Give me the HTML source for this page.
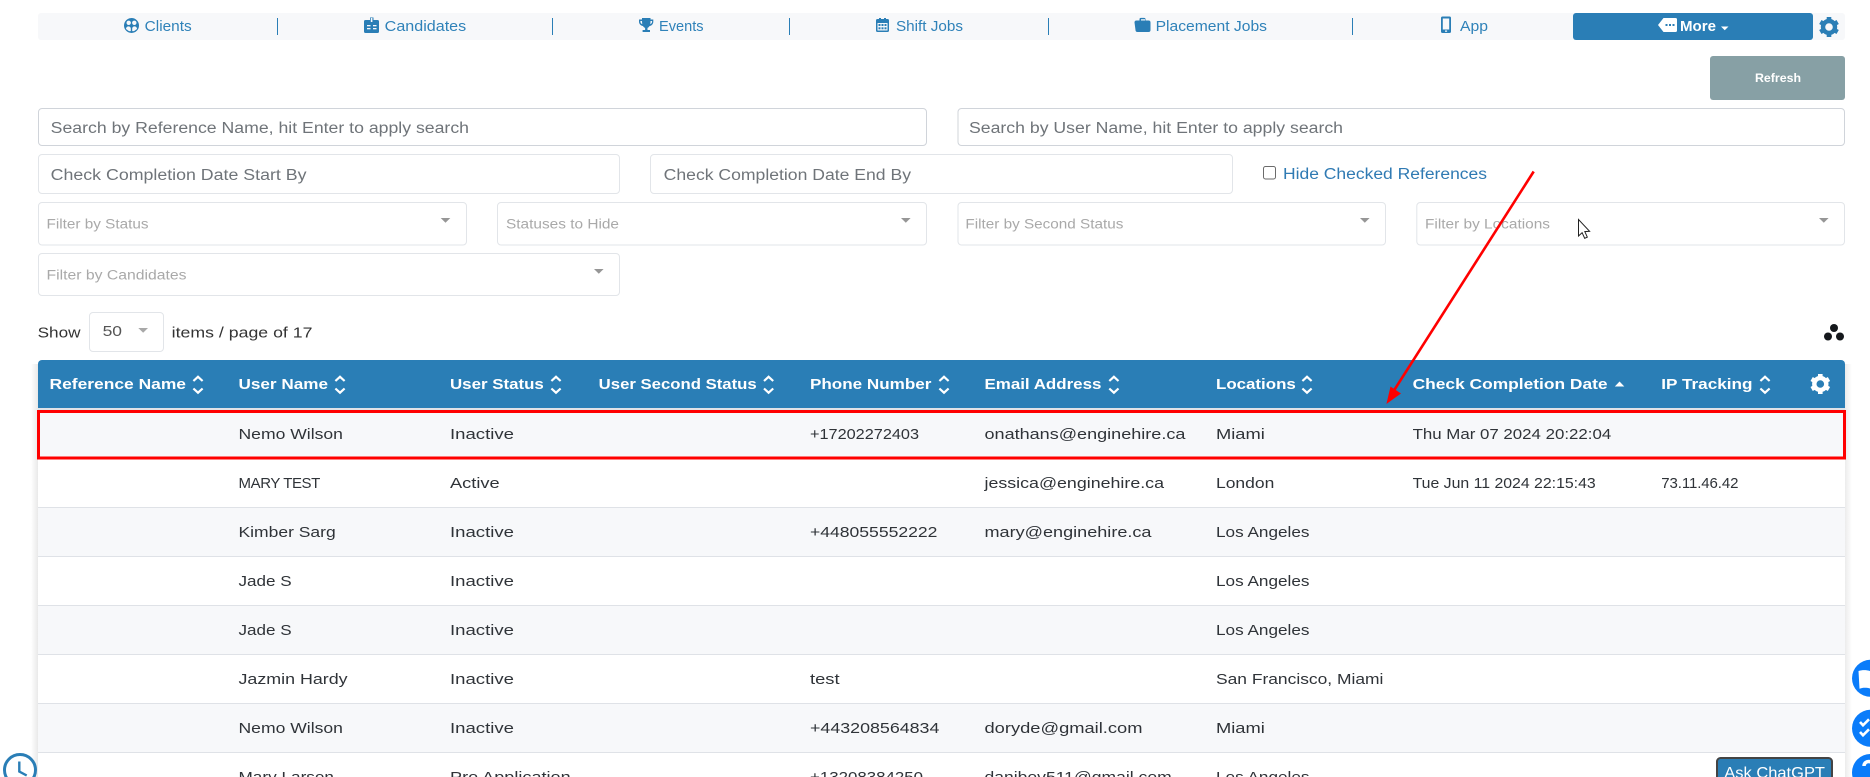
<!DOCTYPE html>
<html lang="en"><head><meta charset="utf-8"><title>References</title>
<style>
html,body{margin:0;padding:0;background:#fff;width:1870px;height:777px;overflow:hidden}
svg{display:block}
text{font-family:"Liberation Sans",sans-serif}
.n{font-size:14.5px;fill:#2f82b9}
.p{font-size:15.5px;fill:#6f7479}
.f{font-size:13.5px;fill:#a9a9a9}
.h{font-size:15px;font-weight:700;fill:#fff}
.c{font-size:15px;fill:#2f3338}
.b{fill:#fff;stroke:#e2e5e9;stroke-width:1}
.b2{fill:#fff;stroke:#d0d4da;stroke-width:1}
</style></head><body>
<svg width="1870" height="777" viewBox="0 0 1870 777" xmlns="http://www.w3.org/2000/svg">
<defs>
<linearGradient id="gl" x1="0" x2="1" y1="0" y2="0"><stop offset="0" stop-color="#fff"/><stop offset="1" stop-color="#e9e9e9"/></linearGradient>
<linearGradient id="gr" x1="0" x2="1" y1="0" y2="0"><stop offset="0" stop-color="#ececec"/><stop offset="1" stop-color="#fff"/></linearGradient>
<g id="s"><path d="M-4.600 6 0 1.800 4.600 6M-4.600 13.500 0 17.700 4.600 13.500" fill="none" stroke="#fff" stroke-width="2.200"/></g>
<g id="gear"><circle cx="0" cy="0" r="6" fill="none" stroke="currentColor" stroke-width="4.4"/><g fill="currentColor"><rect x="-2.3" y="-10" width="4.6" height="4"/><rect x="-2.3" y="6" width="4.6" height="4"/><rect x="-2.3" y="-10" width="4.6" height="4" transform="rotate(60)"/><rect x="-2.3" y="6" width="4.6" height="4" transform="rotate(60)"/><rect x="-2.3" y="-10" width="4.6" height="4" transform="rotate(120)"/><rect x="-2.3" y="6" width="4.6" height="4" transform="rotate(120)"/></g></g>
<path id="arr" d="M0 0H9.6L4.8 4.7Z" fill="#969696"/>
</defs>

<!-- nav -->
<rect x="38" y="13" width="1807" height="27" rx="3" fill="#f7f8fa"/>
<g fill="#2a7eb6">
<rect x="277" y="18" width="1" height="17"/><rect x="552" y="18" width="1" height="17"/><rect x="789" y="18" width="1" height="17"/><rect x="1048" y="18" width="1" height="17"/><rect x="1352" y="18" width="1" height="17"/>
<!-- clients -->
<circle cx="131.500" cy="25.500" r="7.500"/>
<circle cx="128.700" cy="22.800" r="2.200" fill="#f7f8fa"/><circle cx="134.300" cy="22.800" r="2.200" fill="#f7f8fa"/>
<path d="M126 29c0-3.300 4.500-3.600 4.800-.6v2.700h-1.800zM132.200 28.400c.3-3 4.800-2.700 4.800.6l-3 2.100h-1.800z" fill="#f7f8fa"/>
<!-- candidates -->
<path d="M364 21.500a1.500 1.500 0 0 1 1.500-1.500H370v-2.500h3.500V20h4a1.500 1.500 0 0 1 1.500 1.500v10a1.500 1.500 0 0 1-1.500 1.500h-12a1.500 1.500 0 0 1-1.500-1.500z"/>
<g fill="#f7f8fa"><rect x="370.800" y="18" width="1.600" height="4"/><rect x="367" y="25" width="3.500" height="1.300"/><rect x="373" y="25" width="3.500" height="1.300"/><rect x="367" y="28" width="3.500" height="1.300"/><rect x="373" y="28" width="3.500" height="1.300"/></g>
<!-- trophy -->
<path d="M642 18h8.500v1.500h2.800v2.200c0 2.500-2 4-3.700 4.300-.6 1-1.400 1.600-2.100 1.900v2.100h2.500V32h-7.400v-2h2.500v-2.100c-.8-.3-1.600-.9-2.200-1.900-1.700-.3-3.900-1.800-3.900-4.300v-2.200H642zM640.400 21v.7c0 1.100.8 2 1.900 2.500-.2-1-.3-2-.3-3.200zM650.500 21c0 1.200-.1 2.200-.3 3.200 1.100-.5 1.900-1.400 1.900-2.500V21z" fill-rule="evenodd"/>
<!-- calendar -->
<path d="M876 20.500a1.500 1.500 0 0 1 1.500-1.500H879V18h2v1h3V18h2v1h1.500a1.500 1.500 0 0 1 1.500 1.500v10a1.500 1.500 0 0 1-1.500 1.500h-10a1.500 1.500 0 0 1-1.500-1.500z"/>
<rect x="877.500" y="23" width="10" height="7.500" fill="#f7f8fa"/>
<g><rect x="878.500" y="24" width="2" height="2"/><rect x="881.500" y="24" width="2" height="2"/><rect x="884.500" y="24" width="2" height="2"/><rect x="878.500" y="27.300" width="2" height="2"/><rect x="881.500" y="27.300" width="2" height="2"/><rect x="884.500" y="27.300" width="2" height="2"/></g>
<!-- briefcase -->
<path d="M1134.500 22.500a2 2 0 0 1 2-2h3v-1.300a1.300 1.300 0 0 1 1.300-1.300h3.400a1.300 1.300 0 0 1 1.300 1.300v1.300h3a2 2 0 0 1 2 2V30a2 2 0 0 1-2 2h-11a2 2 0 0 1-2-2zM1141 20.500h4v-1.200h-4z" fill-rule="evenodd"/>
<!-- mobile -->
<path d="M1441 18a1.500 1.500 0 0 1 1.500-1.500h7a1.500 1.500 0 0 1 1.500 1.500v13.500a1.500 1.500 0 0 1-1.500 1.500h-7a1.500 1.500 0 0 1-1.500-1.500zM1442.800 18.500V29.500h6.400V18.500zM1445 30.500h2.100v1.200h-2.100z" fill-rule="evenodd"/>
</g>
<text class="n" x="144.700" y="31" textLength="47" lengthAdjust="spacingAndGlyphs">Clients</text>
<text class="n" x="384.700" y="31" textLength="81.500" lengthAdjust="spacingAndGlyphs">Candidates</text>
<text class="n" x="659" y="31" textLength="44.600" lengthAdjust="spacingAndGlyphs">Events</text>
<text class="n" x="896" y="31" textLength="67" lengthAdjust="spacingAndGlyphs">Shift Jobs</text>
<text class="n" x="1155.600" y="31" textLength="111.400" lengthAdjust="spacingAndGlyphs">Placement Jobs</text>
<text class="n" x="1460" y="31" textLength="28" lengthAdjust="spacingAndGlyphs">App</text>
<rect x="1573" y="13" width="240" height="27" rx="3" fill="#2a7eb6"/>
<path d="M1663.500 18H1675.500a1.500 1.500 0 0 1 1.500 1.500v11a1.500 1.500 0 0 1-1.500 1.500H1663.500L1658 25Z" fill="#fff"/>
<g fill="#2a7eb6"><rect x="1665.500" y="24" width="2" height="2"/><rect x="1669" y="24" width="2" height="2"/><rect x="1672.500" y="24" width="2" height="2"/></g>
<text x="1680" y="31" font-size="14.500" font-weight="700" fill="#fff" textLength="36" lengthAdjust="spacingAndGlyphs">More</text>
<path d="M1721 26.500h7.500l-3.750 3.800z" fill="#fff"/>
<use href="#gear" transform="translate(1829 27)" style="color:#2a7eb6"/>

<!-- refresh -->
<rect x="1710" y="56" width="135" height="44" rx="3" fill="#87a0a5"/>
<text x="1755" y="82" font-size="12" font-weight="700" fill="#fff" textLength="46" lengthAdjust="spacingAndGlyphs">Refresh</text>

<!-- inputs -->
<rect class="b2" x="38.500" y="108.500" width="888" height="37" rx="3.500"/>
<text class="p" x="50.700" y="133" textLength="418.300" lengthAdjust="spacingAndGlyphs">Search by Reference Name, hit Enter to apply search</text>
<rect class="b2" x="958" y="108.500" width="886.500" height="37" rx="3.500"/>
<text class="p" x="969" y="133" textLength="374" lengthAdjust="spacingAndGlyphs">Search by User Name, hit Enter to apply search</text>
<rect class="b" x="38.500" y="154.500" width="581" height="39" rx="3.500"/>
<text class="p" x="50.700" y="180" textLength="255.800" lengthAdjust="spacingAndGlyphs">Check Completion Date Start By</text>
<rect class="b" x="650.500" y="154.500" width="582" height="39" rx="3.500"/>
<text class="p" x="663.700" y="180" textLength="247.300" lengthAdjust="spacingAndGlyphs">Check Completion Date End By</text>
<rect x="1263.500" y="166.500" width="12" height="12.500" rx="2" fill="#fff" stroke="#6b6b6b"/>
<text x="1283" y="179" font-size="15.500" fill="#2f7ab3" textLength="204" lengthAdjust="spacingAndGlyphs">Hide Checked References</text>

<!-- selects -->
<rect class="b" x="38.500" y="202.500" width="428" height="42.500" rx="3.500"/>
<rect class="b" x="497.500" y="202.500" width="429" height="42.500" rx="3.500"/>
<rect class="b" x="958" y="202.500" width="427.500" height="42.500" rx="3.500"/>
<rect class="b" x="1416.800" y="202.500" width="427.700" height="42.500" rx="3.500"/>
<rect class="b" x="38.500" y="253.500" width="581" height="42" rx="3.500"/>
<text class="f" x="46.500" y="228.500" textLength="102" lengthAdjust="spacingAndGlyphs">Filter by Status</text>
<text class="f" x="506" y="228.500" textLength="113" lengthAdjust="spacingAndGlyphs">Statuses to Hide</text>
<text class="f" x="965.400" y="228.500" textLength="158" lengthAdjust="spacingAndGlyphs">Filter by Second Status</text>
<text class="f" x="1425" y="228.500" textLength="125" lengthAdjust="spacingAndGlyphs">Filter by Locations</text>
<text class="f" x="46.500" y="279.500" textLength="140" lengthAdjust="spacingAndGlyphs">Filter by Candidates</text>
<use href="#arr" x="440.700" y="218"/><use href="#arr" x="901" y="218"/><use href="#arr" x="1360" y="218"/><use href="#arr" x="1819" y="218"/><use href="#arr" x="594" y="269"/>

<!-- show -->
<text x="37.600" y="337.300" font-size="15" fill="#333" textLength="42.900" lengthAdjust="spacingAndGlyphs">Show</text>
<rect class="b" x="89.500" y="312.500" width="74" height="39" rx="3.500"/>
<text x="102.600" y="336" font-size="15" fill="#555" textLength="19.400" lengthAdjust="spacingAndGlyphs">50</text>
<path d="M138.300 328H148L143.150 332.700Z" fill="#a8a8a8"/>
<text x="171.700" y="337.300" font-size="15" fill="#333" textLength="140.800" lengthAdjust="spacingAndGlyphs">items / page of 17</text>
<g fill="#15181c"><circle cx="1834" cy="328" r="4"/><circle cx="1828" cy="336.500" r="4"/><circle cx="1840" cy="336.500" r="4"/></g>

<!-- table shadow -->
<rect x="31" y="364" width="7" height="413" fill="url(#gl)"/>
<rect x="1845" y="364" width="7" height="413" fill="url(#gr)"/>

<!-- table rows -->
<rect x="38" y="408" width="1807" height="2" fill="#dfe2e7"/>
<rect x="38" y="410" width="1807" height="48" fill="#f7f8fa"/>
<rect x="38" y="458" width="1807" height="49" fill="#fff"/>
<rect x="38" y="507" width="1807" height="49" fill="#f7f8fa"/>
<rect x="38" y="556" width="1807" height="49" fill="#fff"/>
<rect x="38" y="605" width="1807" height="49" fill="#f7f8fa"/>
<rect x="38" y="654" width="1807" height="49" fill="#fff"/>
<rect x="38" y="703" width="1807" height="49" fill="#f7f8fa"/>
<rect x="38" y="752" width="1807" height="25" fill="#fff"/>
<g fill="#dfe2e7"><rect x="38" y="507" width="1807" height="1"/><rect x="38" y="556" width="1807" height="1"/><rect x="38" y="605" width="1807" height="1"/><rect x="38" y="654" width="1807" height="1"/><rect x="38" y="703" width="1807" height="1"/><rect x="38" y="752" width="1807" height="1"/></g>

<!-- header -->
<path d="M38 364a4 4 0 0 1 4-4H1841a4 4 0 0 1 4 4V408H38Z" fill="#2a7eb6"/>
<text class="h" x="49.500" y="389" textLength="136.500" lengthAdjust="spacingAndGlyphs">Reference Name</text><use href="#s" x="198" y="375"/>
<text class="h" x="238.500" y="389" textLength="89.500" lengthAdjust="spacingAndGlyphs">User Name</text><use href="#s" x="340" y="375"/>
<text class="h" x="450" y="389" textLength="93.800" lengthAdjust="spacingAndGlyphs">User Status</text><use href="#s" x="556" y="375"/>
<text class="h" x="598.700" y="389" textLength="158" lengthAdjust="spacingAndGlyphs">User Second Status</text><use href="#s" x="768.600" y="375"/>
<text class="h" x="810" y="389" textLength="121.400" lengthAdjust="spacingAndGlyphs">Phone Number</text><use href="#s" x="944" y="375"/>
<text class="h" x="984.500" y="389" textLength="116.900" lengthAdjust="spacingAndGlyphs">Email Address</text><use href="#s" x="1113.900" y="375"/>
<text class="h" x="1216" y="389" textLength="79.800" lengthAdjust="spacingAndGlyphs">Locations</text><use href="#s" x="1307" y="375"/>
<text class="h" x="1412.600" y="389" textLength="195" lengthAdjust="spacingAndGlyphs">Check Completion Date</text><path d="M1614.800 386.500h9.500l-4.750-5z" fill="#fff"/>
<text class="h" x="1661.300" y="389" textLength="91.200" lengthAdjust="spacingAndGlyphs">IP Tracking</text><use href="#s" x="1765" y="375"/>
<use href="#gear" transform="translate(1820.300 384)" style="color:#fff"/>

<!-- cells -->
<text class="c" x="238.500" y="439" textLength="104.400" lengthAdjust="spacingAndGlyphs">Nemo Wilson</text>
<text class="c" x="450" y="439" textLength="64" lengthAdjust="spacingAndGlyphs">Inactive</text>
<text class="c" x="810" y="439" textLength="109" lengthAdjust="spacingAndGlyphs">+17202272403</text>
<text class="c" x="984.500" y="439" textLength="200.900" lengthAdjust="spacingAndGlyphs">onathans@enginehire.ca</text>
<text class="c" x="1216" y="439" textLength="48.800" lengthAdjust="spacingAndGlyphs">Miami</text>
<text class="c" x="1412.600" y="439" textLength="198.600" lengthAdjust="spacingAndGlyphs">Thu Mar 07 2024 20:22:04</text>

<text class="c" x="238.500" y="488" letter-spacing="-0.4">MARY TEST</text>
<text class="c" x="450" y="488" textLength="49.700" lengthAdjust="spacingAndGlyphs">Active</text>
<text class="c" x="984.500" y="488" textLength="179.500" lengthAdjust="spacingAndGlyphs">jessica@enginehire.ca</text>
<text class="c" x="1216" y="488" textLength="58.300" lengthAdjust="spacingAndGlyphs">London</text>
<text class="c" x="1412.600" y="488" textLength="183.100" lengthAdjust="spacingAndGlyphs">Tue Jun 11 2024 22:15:43</text>
<text class="c" x="1661.300" y="488" letter-spacing="-0.1">73.11.46.42</text>

<text class="c" x="238.500" y="537" textLength="97.200" lengthAdjust="spacingAndGlyphs">Kimber Sarg</text>
<text class="c" x="450" y="537" textLength="64" lengthAdjust="spacingAndGlyphs">Inactive</text>
<text class="c" x="810" y="537" textLength="127.400" lengthAdjust="spacingAndGlyphs">+448055552222</text>
<text class="c" x="984.500" y="537" textLength="167" lengthAdjust="spacingAndGlyphs">mary@enginehire.ca</text>
<text class="c" x="1216" y="537" textLength="93.500" lengthAdjust="spacingAndGlyphs">Los Angeles</text>

<text class="c" x="238.500" y="586" textLength="53.100" lengthAdjust="spacingAndGlyphs">Jade S</text>
<text class="c" x="450" y="586" textLength="64" lengthAdjust="spacingAndGlyphs">Inactive</text>
<text class="c" x="1216" y="586" textLength="93.500" lengthAdjust="spacingAndGlyphs">Los Angeles</text>

<text class="c" x="238.500" y="635" textLength="53.100" lengthAdjust="spacingAndGlyphs">Jade S</text>
<text class="c" x="450" y="635" textLength="64" lengthAdjust="spacingAndGlyphs">Inactive</text>
<text class="c" x="1216" y="635" textLength="93.500" lengthAdjust="spacingAndGlyphs">Los Angeles</text>

<text class="c" x="238.500" y="684" textLength="109.100" lengthAdjust="spacingAndGlyphs">Jazmin Hardy</text>
<text class="c" x="450" y="684" textLength="64" lengthAdjust="spacingAndGlyphs">Inactive</text>
<text class="c" x="810" y="684" textLength="29.600" lengthAdjust="spacingAndGlyphs">test</text>
<text class="c" x="1216" y="684" textLength="167.400" lengthAdjust="spacingAndGlyphs">San Francisco, Miami</text>

<text class="c" x="238.500" y="733" textLength="104.400" lengthAdjust="spacingAndGlyphs">Nemo Wilson</text>
<text class="c" x="450" y="733" textLength="64" lengthAdjust="spacingAndGlyphs">Inactive</text>
<text class="c" x="810" y="733" textLength="129.400" lengthAdjust="spacingAndGlyphs">+443208564834</text>
<text class="c" x="984.500" y="733" textLength="158" lengthAdjust="spacingAndGlyphs">doryde@gmail.com</text>
<text class="c" x="1216" y="733" textLength="48.800" lengthAdjust="spacingAndGlyphs">Miami</text>

<text class="c" x="238.500" y="782" textLength="95.500" lengthAdjust="spacingAndGlyphs">Mary Larson</text>
<text class="c" x="450" y="782" textLength="120.700" lengthAdjust="spacingAndGlyphs">Pro Application</text>
<text class="c" x="810" y="782" textLength="113" lengthAdjust="spacingAndGlyphs">+13208384250</text>
<text class="c" x="984.500" y="782" textLength="187.200" lengthAdjust="spacingAndGlyphs">danibov511@gmail.com</text>
<text class="c" x="1216" y="782" textLength="93.500" lengthAdjust="spacingAndGlyphs">Los Angeles</text>

<!-- annotation -->
<rect x="38.500" y="411.500" width="1806" height="46.500" fill="none" stroke="#f00" stroke-width="3"/>
<path d="M1533.700 171.500 1393 392" fill="none" stroke="#f00" stroke-width="2.600"/>
<path d="M1386.400 404 1390.500 386.500 1401 393.500Z" fill="#f00"/>

<!-- cursor -->
<path d="M1578.500 219.500V236l3.600-3.300 2.600 5.600 2.600-1.200-2.500-5.500 4.800-.3Z" fill="#fff" stroke="#222" stroke-width="1"/>

<!-- floating -->
<circle cx="20" cy="770" r="15.500" fill="#fff" stroke="#2a7eb6" stroke-width="3"/>
<path d="M19.300 761.500V771.500L26.700 775.500" fill="none" stroke="#2a7eb6" stroke-width="2.400"/>
<circle cx="1870.500" cy="678.300" r="18.500" fill="#0a7cfa"/>
<path d="M1858.500 671c4-1.200 8-1 11.500 0v17.500c-3.500-1-7.500-1-10.500.3z" fill="#fff"/>
<circle cx="1870.500" cy="728.300" r="18.500" fill="#0a7cfa"/>
<path d="M1860 722l3 3.300 6-6M1860 732l3 3.300 6-6" fill="none" stroke="#fff" stroke-width="2.600"/>
<circle cx="1870.500" cy="772.500" r="18.500" fill="#0a7cfa"/>
<path d="M1864 766c0-6 10-6 8 0" fill="none" stroke="#fff" stroke-width="3.500"/>
<rect x="1717" y="758" width="115" height="30" rx="3.500" fill="#2a7eb6" stroke="#444" stroke-width="2"/>
<text x="1724.300" y="778" font-size="16" fill="#fff" textLength="100.700" lengthAdjust="spacingAndGlyphs">Ask ChatGPT</text>
</svg>
</body></html>
